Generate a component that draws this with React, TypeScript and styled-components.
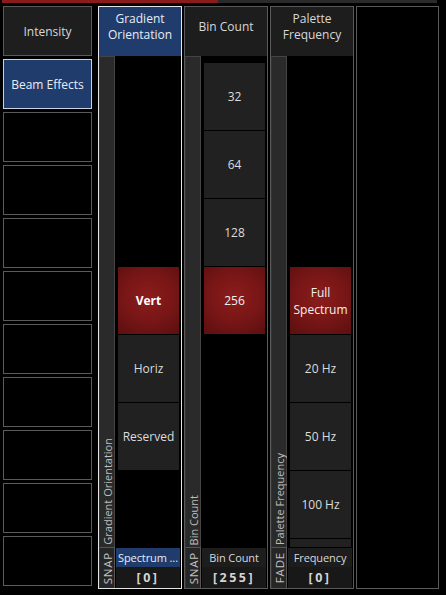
import styled, { createGlobalStyle, css } from "styled-components";

const GlobalStyle = createGlobalStyle`
  html, body {
    margin: 0;
    padding: 0;
    background: #000;
  }
  body {
    font-family: "Open Sans", "Noto Sans", "Liberation Sans", sans-serif;
    color: #dcdcdc;
  }
`;

const Page = styled.div`
  width: 446px;
  height: 595px;
  background: #000;
  overflow: hidden;
`;

const TopBar = styled.div`
  display: flex;
  height: 3px;
  margin: 0 9px 0 2px;
`;

const TopBarPart = styled.div<{ $lit?: boolean }>`
  height: 100%;
  width: ${(p) => (p.$lit ? "216px" : "auto")};
  flex: ${(p) => (p.$lit ? "none" : "1")};
  background: ${(p) => (p.$lit ? "#8a1b1b" : "#2a2a2a")};
`;

const Main = styled.div`
  display: flex;
  padding: 3px 0 0 3px;
  gap: 6px;
`;

const SideList = styled.div`
  display: flex;
  flex-direction: column;
  gap: 3px;
  width: 89px;
`;

const SideButton = styled.div<{ $variant?: "plain" | "active" | "empty" }>`
  box-sizing: border-box;
  height: 50px;
  display: flex;
  align-items: center;
  justify-content: center;
  font-size: 12px;
  border: 1px solid #5a5a5a;
  background: #000;
  ${(p) =>
    p.$variant === "plain" &&
    css`
      background: #1e1e1e;
      color: #d8d8d8;
    `}
  ${(p) =>
    p.$variant === "active" &&
    css`
      background: #1f3c6d;
      border-color: #c9d2e3;
      color: #e8edf5;
    `}
`;

const Faders = styled.div`
  display: flex;
  gap: 2px;
`;

const Fader = styled.div<{ $selected?: boolean }>`
  box-sizing: border-box;
  width: 84px;
  height: 583px;
  display: flex;
  flex-direction: column;
  border: 1px solid ${(p) => (p.$selected ? "#e6e6e6" : "#5a5a5a")};
  background: #000;
`;

const FaderHeader = styled.div<{ $active?: boolean }>`
  box-sizing: border-box;
  height: 49px;
  flex: none;
  display: flex;
  align-items: center;
  justify-content: center;
  padding-bottom: 10px;
  text-align: center;
  font-size: 12px;
  line-height: 16px;
  background: ${(p) => (p.$active ? "#1f3c6d" : "#1d1d1d")};
  color: ${(p) => (p.$active ? "#e8edf5" : "#d8d8d8")};
`;

const FaderBody = styled.div`
  flex: 1;
  display: flex;
  min-height: 0;
`;

const Strip = styled.div`
  box-sizing: border-box;
  width: 16px;
  flex: none;
  display: flex;
  flex-direction: column;
  justify-content: flex-end;
  align-items: center;
  background: #2a2a2a;
  border: 1px solid #444;
  border-bottom: none;
  border-left-color: #333;
`;

const StripLabel = styled.div`
  writing-mode: vertical-rl;
  transform: rotate(180deg);
  font-size: 11px;
  color: #bdbdbd;
  white-space: nowrap;
  padding-top: 2px;
`;

const SlotList = styled.div`
  flex: 1;
  display: flex;
  flex-direction: column;
  gap: 1px;
  padding: 7px 2px 0 3px;
  overflow: hidden;
`;

const Slot = styled.div<{ $state?: "empty" | "idle" | "on" }>`
  flex: none;
  height: 67px;
  display: flex;
  align-items: center;
  justify-content: center;
  text-align: center;
  font-size: 12px;
  line-height: 17px;
  color: #dcdcdc;
  background: ${(p) =>
    p.$state === "empty" ? "transparent" : p.$state === "on" ? "#7a1515" : "#212121"};
  ${(p) =>
    p.$state === "on" &&
    css`
      background: radial-gradient(
        ellipse 75% 65% at 50% 45%,
        #8c1c1c 0%,
        #781616 55%,
        #5f1010 100%
      );
      color: #f0f0f0;
    `}
`;

const Strong = styled.span`
  font-weight: 700;
  color: #fff;
`;

const FaderFooter = styled.div`
  height: 41px;
  flex: none;
  display: flex;
`;

const ModeCell = styled.div`
  box-sizing: border-box;
  width: 16px;
  flex: none;
  display: flex;
  align-items: center;
  justify-content: center;
  background: #262626;
  border: 1px solid #555;
  border-bottom: none;
  border-left-color: #333;
`;

const ModeText = styled.div`
  writing-mode: vertical-rl;
  transform: rotate(180deg);
  font-size: 11.5px;
  color: #c4c4c4;
  letter-spacing: 0.8px;
`;

const Readout = styled.div`
  flex: 1;
  display: flex;
  flex-direction: column;
  padding: 1px 1px 0 1px;
  min-width: 0;
`;

const ReadoutLabel = styled.div<{ $active?: boolean }>`
  height: 19px;
  display: flex;
  align-items: center;
  justify-content: center;
  font-size: 11px;
  letter-spacing: -0.1px;
  white-space: nowrap;
  overflow: hidden;
  background: ${(p) => (p.$active ? "#1f3c6d" : "#1d1d1d")};
  color: ${(p) => (p.$active ? "#e8edf5" : "#d8d8d8")};
`;

const ReadoutValue = styled.div`
  flex: 1;
  display: flex;
  align-items: center;
  justify-content: center;
  font-size: 12.5px;
  font-weight: 700;
  letter-spacing: 2.5px;
  color: #d4d4d4;
  background: #181818;
`;

const EmptyFader = styled.div`
  box-sizing: border-box;
  width: 83px;
  height: 583px;
  border: 1px solid #5a5a5a;
  background: #000;
`;

type SlotDef = { text?: string; on?: boolean; bold?: boolean };

type FaderDef = {
  title: string[];
  stripLabel: string;
  mode: string;
  readout: string;
  value: string;
  selected?: boolean;
  slots: SlotDef[];
};

const faders: FaderDef[] = [
  {
    title: ["Gradient", "Orientation"],
    stripLabel: "Gradient Orientation",
    mode: "SNAP",
    readout: "Spectrum ...",
    value: "[0]",
    selected: true,
    slots: [{}, {}, {}, { text: "Vert", on: true, bold: true }, { text: "Horiz" }, { text: "Reserved" }],
  },
  {
    title: ["Bin Count"],
    stripLabel: "Bin Count",
    mode: "SNAP",
    readout: "Bin Count",
    value: "[255]",
    slots: [{ text: "32" }, { text: "64" }, { text: "128" }, { text: "256", on: true }],
  },
  {
    title: ["Palette", "Frequency"],
    stripLabel: "Palette Frequency",
    mode: "FADE",
    readout: "Frequency",
    value: "[0]",
    slots: [
      {},
      {},
      {},
      { text: "Full Spectrum", on: true },
      { text: "20 Hz" },
      { text: "50 Hz" },
      { text: "100 Hz" },
      { text: "" },
    ],
  },
];

const sideItems = ["Intensity", "Beam Effects", "", "", "", "", "", "", "", "", ""];

const App = () => {
  return (
    <Page>
      <GlobalStyle />
      <TopBar>
        <TopBarPart $lit />
        <TopBarPart />
      </TopBar>
      <Main>
        <SideList>
          {sideItems.map((label, i) => (
            <SideButton key={i} $variant={i === 0 ? "plain" : i === 1 ? "active" : "empty"}>
              {label}
            </SideButton>
          ))}
        </SideList>
        <Faders>
          {faders.map((f) => (
            <Fader key={f.stripLabel} $selected={f.selected}>
              <FaderHeader $active={f.selected}>
                <div>
                  {f.title.map((line) => (
                    <div key={line}>{line}</div>
                  ))}
                </div>
              </FaderHeader>
              <FaderBody>
                <Strip>
                  <StripLabel>{f.stripLabel}</StripLabel>
                </Strip>
                <SlotList>
                  {f.slots.map((s, i) => (
                    <Slot key={i} $state={s.text === undefined ? "empty" : s.on ? "on" : "idle"}>
                      {s.bold ? (
                        <Strong>{s.text}</Strong>
                      ) : s.text === "Full Spectrum" ? (
                        <span>
                          Full
                          <br />
                          Spectrum
                        </span>
                      ) : (
                        s.text
                      )}
                    </Slot>
                  ))}
                </SlotList>
              </FaderBody>
              <FaderFooter>
                <ModeCell>
                  <ModeText>{f.mode}</ModeText>
                </ModeCell>
                <Readout>
                  <ReadoutLabel $active={f.selected}>{f.readout}</ReadoutLabel>
                  <ReadoutValue>{f.value}</ReadoutValue>
                </Readout>
              </FaderFooter>
            </Fader>
          ))}
          <EmptyFader />
        </Faders>
      </Main>
    </Page>
  );
};

export default App;
